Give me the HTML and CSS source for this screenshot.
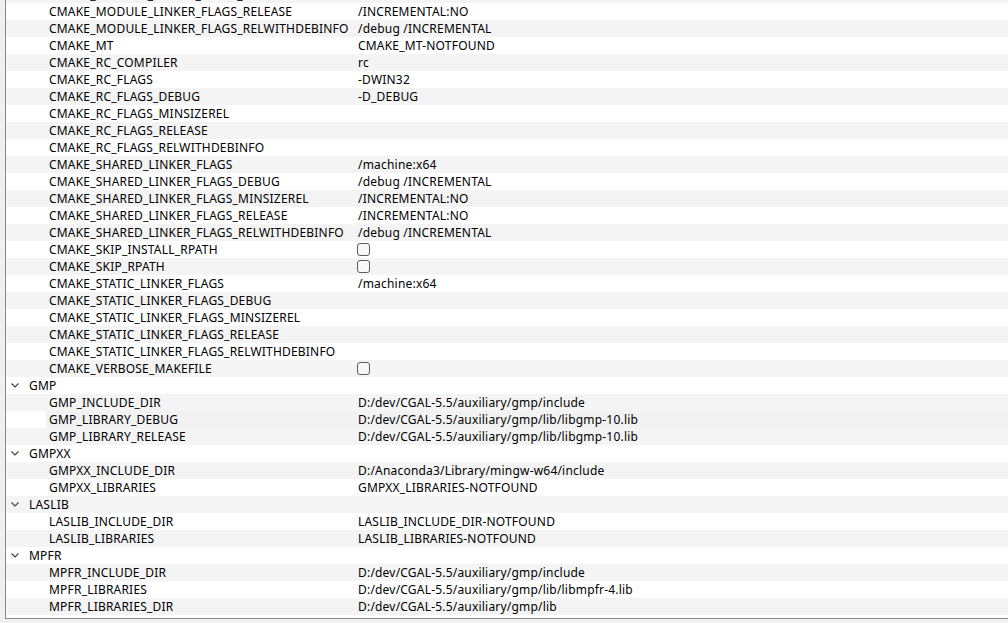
FILE: index.html
```html
<!DOCTYPE html>
<html>
<head>
<meta charset="utf-8">
<link rel="stylesheet" href="styles.css">
</head>
<body>
<div class="view">
  <div class="list">
    <div class="row odd"><div class="indent child"></div><div class="cells"><div class="name cname">CMAKE_MODULE_LINKER_FLAGS_MINSIZEREL</div><div class="value">/INCREMENTAL:NO</div></div></div>
    <div class="row"><div class="indent child"></div><div class="cells"><div class="name cname">CMAKE_MODULE_LINKER_FLAGS_RELEASE</div><div class="value">/INCREMENTAL:NO</div></div></div>
    <div class="row odd"><div class="indent child"></div><div class="cells"><div class="name cname">CMAKE_MODULE_LINKER_FLAGS_RELWITHDEBINFO</div><div class="value">/debug /INCREMENTAL</div></div></div>
    <div class="row"><div class="indent child"></div><div class="cells"><div class="name cname">CMAKE_MT</div><div class="value">CMAKE_MT-NOTFOUND</div></div></div>
    <div class="row odd"><div class="indent child"></div><div class="cells"><div class="name cname">CMAKE_RC_COMPILER</div><div class="value">rc</div></div></div>
    <div class="row"><div class="indent child"></div><div class="cells"><div class="name cname">CMAKE_RC_FLAGS</div><div class="value">-DWIN32</div></div></div>
    <div class="row odd"><div class="indent child"></div><div class="cells"><div class="name cname">CMAKE_RC_FLAGS_DEBUG</div><div class="value">-D_DEBUG</div></div></div>
    <div class="row"><div class="indent child"></div><div class="cells"><div class="name cname">CMAKE_RC_FLAGS_MINSIZEREL</div><div class="value"></div></div></div>
    <div class="row odd"><div class="indent child"></div><div class="cells"><div class="name cname">CMAKE_RC_FLAGS_RELEASE</div><div class="value"></div></div></div>
    <div class="row"><div class="indent child"></div><div class="cells"><div class="name cname">CMAKE_RC_FLAGS_RELWITHDEBINFO</div><div class="value"></div></div></div>
    <div class="row odd"><div class="indent child"></div><div class="cells"><div class="name cname">CMAKE_SHARED_LINKER_FLAGS</div><div class="value">/machine:x64</div></div></div>
    <div class="row"><div class="indent child"></div><div class="cells"><div class="name cname">CMAKE_SHARED_LINKER_FLAGS_DEBUG</div><div class="value">/debug /INCREMENTAL</div></div></div>
    <div class="row odd"><div class="indent child"></div><div class="cells"><div class="name cname">CMAKE_SHARED_LINKER_FLAGS_MINSIZEREL</div><div class="value">/INCREMENTAL:NO</div></div></div>
    <div class="row"><div class="indent child"></div><div class="cells"><div class="name cname">CMAKE_SHARED_LINKER_FLAGS_RELEASE</div><div class="value">/INCREMENTAL:NO</div></div></div>
    <div class="row odd"><div class="indent child"></div><div class="cells"><div class="name cname">CMAKE_SHARED_LINKER_FLAGS_RELWITHDEBINFO</div><div class="value">/debug /INCREMENTAL</div></div></div>
    <div class="row"><div class="indent child"></div><div class="cells"><div class="name cname">CMAKE_SKIP_INSTALL_RPATH</div><div class="value"><span class="check"></span></div></div></div>
    <div class="row odd"><div class="indent child"></div><div class="cells"><div class="name cname">CMAKE_SKIP_RPATH</div><div class="value"><span class="check"></span></div></div></div>
    <div class="row"><div class="indent child"></div><div class="cells"><div class="name cname">CMAKE_STATIC_LINKER_FLAGS</div><div class="value">/machine:x64</div></div></div>
    <div class="row odd"><div class="indent child"></div><div class="cells"><div class="name cname">CMAKE_STATIC_LINKER_FLAGS_DEBUG</div><div class="value"></div></div></div>
    <div class="row"><div class="indent child"></div><div class="cells"><div class="name cname">CMAKE_STATIC_LINKER_FLAGS_MINSIZEREL</div><div class="value"></div></div></div>
    <div class="row odd"><div class="indent child"></div><div class="cells"><div class="name cname">CMAKE_STATIC_LINKER_FLAGS_RELEASE</div><div class="value"></div></div></div>
    <div class="row"><div class="indent child"></div><div class="cells"><div class="name cname">CMAKE_STATIC_LINKER_FLAGS_RELWITHDEBINFO</div><div class="value"></div></div></div>
    <div class="row odd"><div class="indent child"></div><div class="cells"><div class="name cname">CMAKE_VERBOSE_MAKEFILE</div><div class="value"><span class="check"></span></div></div></div>

    <div class="row"><div class="indent group"><svg class="chev" width="8" height="5" viewBox="0 0 8 5"><path d="M0.5 0.5 L4 4 L7.5 0.5" fill="none" stroke="#404040" stroke-width="1.1"/></svg></div><div class="cells"><div class="name gname">GMP</div><div class="value"></div></div></div>
    <div class="row odd"><div class="indent child"></div><div class="cells"><div class="name cname">GMP_INCLUDE_DIR</div><div class="value">D:/dev/CGAL-5.5/auxiliary/gmp/include</div></div></div>
    <div class="row"><div class="indent child"></div><div class="cells hover"><div class="name cname">GMP_LIBRARY_DEBUG</div><div class="value">D:/dev/CGAL-5.5/auxiliary/gmp/lib/libgmp-10.lib</div></div></div>
    <div class="row odd"><div class="indent child"></div><div class="cells"><div class="name cname">GMP_LIBRARY_RELEASE</div><div class="value">D:/dev/CGAL-5.5/auxiliary/gmp/lib/libgmp-10.lib</div></div></div>

    <div class="row"><div class="indent group"><svg class="chev" width="8" height="5" viewBox="0 0 8 5"><path d="M0.5 0.5 L4 4 L7.5 0.5" fill="none" stroke="#404040" stroke-width="1.1"/></svg></div><div class="cells"><div class="name gname">GMPXX</div><div class="value"></div></div></div>
    <div class="row odd"><div class="indent child"></div><div class="cells"><div class="name cname">GMPXX_INCLUDE_DIR</div><div class="value">D:/Anaconda3/Library/mingw-w64/include</div></div></div>
    <div class="row"><div class="indent child"></div><div class="cells"><div class="name cname">GMPXX_LIBRARIES</div><div class="value">GMPXX_LIBRARIES-NOTFOUND</div></div></div>

    <div class="row odd"><div class="indent group"><svg class="chev" width="8" height="5" viewBox="0 0 8 5"><path d="M0.5 0.5 L4 4 L7.5 0.5" fill="none" stroke="#404040" stroke-width="1.1"/></svg></div><div class="cells"><div class="name gname">LASLIB</div><div class="value"></div></div></div>
    <div class="row"><div class="indent child"></div><div class="cells"><div class="name cname">LASLIB_INCLUDE_DIR</div><div class="value">LASLIB_INCLUDE_DIR-NOTFOUND</div></div></div>
    <div class="row odd"><div class="indent child"></div><div class="cells"><div class="name cname">LASLIB_LIBRARIES</div><div class="value">LASLIB_LIBRARIES-NOTFOUND</div></div></div>

    <div class="row"><div class="indent group"><svg class="chev" width="8" height="5" viewBox="0 0 8 5"><path d="M0.5 0.5 L4 4 L7.5 0.5" fill="none" stroke="#404040" stroke-width="1.1"/></svg></div><div class="cells"><div class="name gname">MPFR</div><div class="value"></div></div></div>
    <div class="row odd"><div class="indent child"></div><div class="cells"><div class="name cname">MPFR_INCLUDE_DIR</div><div class="value">D:/dev/CGAL-5.5/auxiliary/gmp/include</div></div></div>
    <div class="row"><div class="indent child"></div><div class="cells"><div class="name cname">MPFR_LIBRARIES</div><div class="value">D:/dev/CGAL-5.5/auxiliary/gmp/lib/libmpfr-4.lib</div></div></div>
    <div class="row odd"><div class="indent child"></div><div class="cells"><div class="name cname">MPFR_LIBRARIES_DIR</div><div class="value">D:/dev/CGAL-5.5/auxiliary/gmp/lib</div></div></div>
  </div>
</div>
</body>
</html>
```

FILE: styles.css
```css
html, body {
  margin: 0;
  padding: 0;
}
body {
  background: #f0f0f0;
  width: 1008px;
  height: 623px;
  overflow: hidden;
  font-family: "Noto Sans", "Liberation Sans", sans-serif;
  font-size: 12px;
  letter-spacing: 0.2px;
  color: #000;
}
.view {
  margin-left: 5px;
  height: 618px;
  border-left: 1px solid #828790;
  border-bottom: 1px solid #828790;
  background: #fff;
  overflow: hidden;
}
.list {
  margin-top: -14px;
}
.row {
  display: flex;
  height: 17px;
  line-height: 17px;
  background: #fff;
  white-space: nowrap;
}
.row.odd {
  background: #f4f4f4;
}
.indent {
  flex: 0 0 auto;
  display: flex;
  align-items: center;
}
.indent.child {
  width: 40px;
}
.indent.group {
  width: 20px;
  padding-left: 5px;
  box-sizing: border-box;
}
.chev {
  display: block;
}
.cells {
  flex: 1 1 auto;
  display: flex;
}
.cells.hover {
  background: #f2f2f2;
}
.name {
  flex: 0 0 auto;
  padding-left: 3px;
  box-sizing: border-box;
  overflow: hidden;
}
.cname {
  width: 308px;
}
.gname {
  width: 328px;
}
.value {
  flex: 1 1 auto;
  padding-left: 4px;
  display: flex;
  align-items: center;
}
.check {
  display: block;
  width: 13px;
  height: 13px;
  box-sizing: border-box;
  margin-left: -1px;
  border: 1px solid #5c5c5c;
  border-radius: 3px;
  background: #f8f8f8;
}
```
